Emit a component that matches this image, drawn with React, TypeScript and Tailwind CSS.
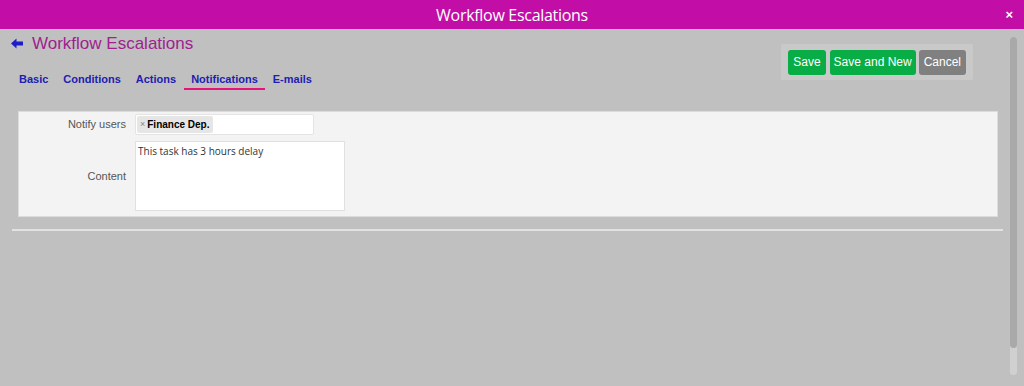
import React from 'react';

const tabs = ['Basic', 'Conditions', 'Actions', 'Notifications', 'E-mails'];

const App: React.FC = () => {
  const active = 'Notifications';

  return (
    <div className="w-[1024px] h-[386px] overflow-hidden bg-[#c0c0c0] flex flex-col font-['Liberation_Sans',Arial,sans-serif]">
      {/* Modal header */}
      <div className="h-[29px] shrink-0 bg-[#c20ea6] relative flex items-center justify-center">
        <span className="text-white text-[16px] font-['Open_Sans',sans-serif] tracking-[-0.3px]">Workflow Escalations</span>
        <span className="absolute right-[11px] top-[5px] text-white text-[13px] font-bold">×</span>
      </div>

      <div className="flex flex-1 min-h-0">
        {/* Main content */}
        <div className="w-[1003px] flex flex-col">
          <div className="flex justify-between">
            <div className="flex flex-col">
              <div className="flex items-center pl-[11px] pt-[5px] h-[23px]">
                <svg width="12" height="11" viewBox="0 0 12 11" className="mr-[9px]">
                  <path d="M0 5.5 L5.5 0.5 L5.5 3.5 L12 3.5 L12 7.5 L5.5 7.5 L5.5 10.5 Z" fill="#1c1cc8" />
                </svg>
                <span className="text-[17px] text-[#a0208f] leading-none">Workflow Escalations</span>
              </div>
              <div className="flex pl-[19px] mt-[20px] gap-[15px]">
                {tabs.map((t) => (
                  <div key={t} className="relative">
                    <span className="text-[11px] font-bold text-[#2020b0] leading-[14px] block">{t}</span>
                    {t === active && (
                      <div className="absolute left-[-7px] right-[-7px] top-[16px] h-[2px] bg-[#e8127a]" />
                    )}
                  </div>
                ))}
              </div>
            </div>
            <div className="mt-[15px] mr-[30px] h-[36px] bg-[#c9c9c9] rounded-[2px] flex items-center px-[7px]">
              <button className="h-[25px] px-[5px] bg-[#08ad45] text-white text-[12px] rounded-[3px]">Save</button>
              <button className="ml-[4px] h-[25px] px-[4px] bg-[#08ad45] text-white text-[12px] rounded-[3px]">Save and New</button>
              <button className="ml-[3px] h-[25px] px-[5px] bg-[#808080] text-white text-[12px] rounded-[3px]">Cancel</button>
            </div>
          </div>

          {/* Form panel */}
          <div className="ml-[18px] mr-[5px] mt-[25px] bg-[#f3f3f3] border border-[#dcdcdc] pt-[2px] pb-[5px] flex flex-col gap-[6px]">
            <div className="flex items-center">
              <div className="w-[107px] text-right text-[11px] text-[#555]">Notify users</div>
              <div className="ml-[9px] w-[179px] h-[21px] bg-white border border-[#e4e4e4] rounded-[2px] flex items-center px-[1px]">
                <span className="bg-[#e6e6e6] rounded-[2px] h-[17px] px-[3px] flex items-center gap-[2px]">
                  <span className="text-[9px] text-[#888]">×</span>
                  <span className="text-[10px] font-bold text-black">Finance Dep.</span>
                </span>
              </div>
            </div>
            <div className="flex items-center">
              <div className="w-[107px] text-right text-[11px] text-[#555]">Content</div>
              <div className="ml-[9px] w-[210px] h-[70px] bg-white border border-[#e0e0e0] px-[2px] pt-[2px] text-[10px] leading-[14px] text-[#333] font-['Open_Sans',sans-serif]">
                This task has 3 hours delay
              </div>
            </div>
          </div>

          <div className="ml-[12px] mt-[12px] h-[2px] bg-[#e2e2e2]" />
        </div>

        {/* Scrollbar */}
        <div className="flex-1 pl-[7px] pt-[8px] pb-[11px]">
          <div className="w-[7px] h-full rounded-full bg-[#d0d0d0] flex flex-col">
            <div className="h-[311px] rounded-full bg-[#a9a9a9]" />
          </div>
        </div>
      </div>
    </div>
  );
};

export default App;
